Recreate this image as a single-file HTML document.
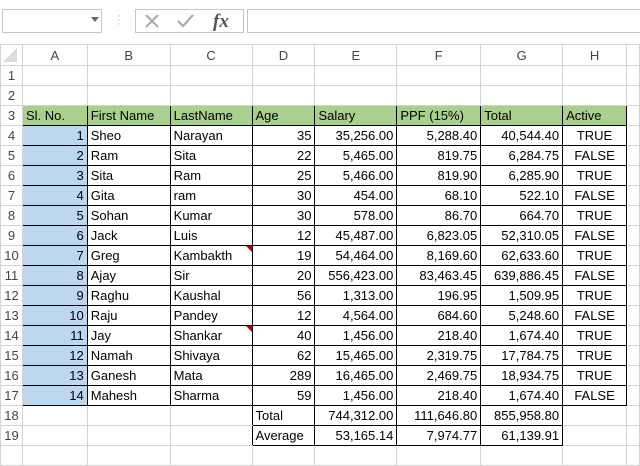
<!DOCTYPE html><html><head><style>
body{margin:0;width:640px;height:459px;overflow:hidden;background:#fff;font-family:"Liberation Sans",sans-serif;position:relative}
.nb{position:absolute;left:2px;top:9px;width:100px;height:24px;border:1px solid #c6c6c6;box-sizing:border-box}
.fx{position:absolute;left:135px;top:9px;width:109px;height:24px;border:1px solid #c6c6c6;box-sizing:border-box}
.fb{position:absolute;left:247px;top:9px;width:400px;height:24px;border:1px solid #c6c6c6;box-sizing:border-box}
table{position:absolute;left:0;top:44px;border-collapse:collapse;table-layout:fixed;font-size:13px}
td{border:1px solid #d4d4d4;height:19px;padding:0 3px;white-space:nowrap;overflow:hidden;color:#000;line-height:17px}
tr.h td{background:#fff;color:#444;text-align:center;height:20px}
td.rh{text-align:center;color:#444;padding:0}
.r{text-align:right}.c{text-align:center}
.g{background:#a9d08e}.bl{background:#bdd7ee}
.k{border:1px solid #000}
.kr{border-right:1px solid #000}
.tri{position:absolute;width:0;height:0;border-top:6px solid #c00000;border-left:6px solid transparent}
</style></head><body>
<div class="nb"><span style="position:absolute;left:88px;top:7px;border-top:5px solid #666;border-left:4px solid transparent;border-right:4px solid transparent"></span></div>
<div style="position:absolute;left:117px;top:14px;color:#aaa;font-size:11px;line-height:4px">·<br>·<br>·</div>
<div class="fx">
<svg width="107" height="22" style="position:absolute;left:0;top:0"><path d="M10 5L22 17M22 5L10 17" stroke="#aaa" stroke-width="2"/><path d="M42 11L47 16L57 5" stroke="#aaa" stroke-width="2.2" fill="none"/><text x="77" y="17" font-family="Liberation Serif" font-style="italic" font-weight="bold" font-size="19" fill="#555">fx</text></svg></div>
<div class="fb"></div>
<table>
<colgroup><col style="width:22px"><col style="width:65px"><col style="width:83px"><col style="width:82px"><col style="width:63px"><col style="width:82px"><col style="width:84px"><col style="width:82px"><col style="width:64px"><col style="width:13px"></colgroup>
<tr class="h"><td></td><td>A</td><td>B</td><td>C</td><td>D</td><td>E</td><td>F</td><td>G</td><td>H</td><td></td></tr>
<tr><td class="rh">1</td><td></td><td></td><td></td><td></td><td></td><td></td><td></td><td></td><td></td></tr>
<tr><td class="rh">2</td><td></td><td></td><td></td><td></td><td></td><td></td><td></td><td></td><td></td></tr>
<tr><td class="rh">3</td><td class="k g">Sl. No.</td><td class="k g">First Name</td><td class="k g">LastName</td><td class="k g">Age</td><td class="k g">Salary</td><td class="k g">PPF (15%)</td><td class="k g">Total</td><td class="k g">Active</td><td></td></tr>
<tr><td class="rh">4</td><td class="k bl r">1</td><td class="k">Sheo</td><td class="k">Narayan</td><td class="k r">35</td><td class="k r">35,256.00</td><td class="k r">5,288.40</td><td class="k r">40,544.40</td><td class="k c">TRUE</td><td></td></tr>
<tr><td class="rh">5</td><td class="k bl r">2</td><td class="k">Ram</td><td class="k">Sita</td><td class="k r">22</td><td class="k r">5,465.00</td><td class="k r">819.75</td><td class="k r">6,284.75</td><td class="k c">FALSE</td><td></td></tr>
<tr><td class="rh">6</td><td class="k bl r">3</td><td class="k">Sita</td><td class="k">Ram</td><td class="k r">25</td><td class="k r">5,466.00</td><td class="k r">819.90</td><td class="k r">6,285.90</td><td class="k c">TRUE</td><td></td></tr>
<tr><td class="rh">7</td><td class="k bl r">4</td><td class="k">Gita</td><td class="k">ram</td><td class="k r">30</td><td class="k r">454.00</td><td class="k r">68.10</td><td class="k r">522.10</td><td class="k c">FALSE</td><td></td></tr>
<tr><td class="rh">8</td><td class="k bl r">5</td><td class="k">Sohan</td><td class="k">Kumar</td><td class="k r">30</td><td class="k r">578.00</td><td class="k r">86.70</td><td class="k r">664.70</td><td class="k c">TRUE</td><td></td></tr>
<tr><td class="rh">9</td><td class="k bl r">6</td><td class="k">Jack</td><td class="k">Luis</td><td class="k r">12</td><td class="k r">45,487.00</td><td class="k r">6,823.05</td><td class="k r">52,310.05</td><td class="k c">FALSE</td><td></td></tr>
<tr><td class="rh">10</td><td class="k bl r">7</td><td class="k">Greg</td><td class="k">Kambakth</td><td class="k r">19</td><td class="k r">54,464.00</td><td class="k r">8,169.60</td><td class="k r">62,633.60</td><td class="k c">TRUE</td><td></td></tr>
<tr><td class="rh">11</td><td class="k bl r">8</td><td class="k">Ajay</td><td class="k">Sir</td><td class="k r">20</td><td class="k r">556,423.00</td><td class="k r">83,463.45</td><td class="k r">639,886.45</td><td class="k c">FALSE</td><td></td></tr>
<tr><td class="rh">12</td><td class="k bl r">9</td><td class="k">Raghu</td><td class="k">Kaushal</td><td class="k r">56</td><td class="k r">1,313.00</td><td class="k r">196.95</td><td class="k r">1,509.95</td><td class="k c">TRUE</td><td></td></tr>
<tr><td class="rh">13</td><td class="k bl r">10</td><td class="k">Raju</td><td class="k">Pandey</td><td class="k r">12</td><td class="k r">4,564.00</td><td class="k r">684.60</td><td class="k r">5,248.60</td><td class="k c">FALSE</td><td></td></tr>
<tr><td class="rh">14</td><td class="k bl r">11</td><td class="k">Jay</td><td class="k">Shankar</td><td class="k r">40</td><td class="k r">1,456.00</td><td class="k r">218.40</td><td class="k r">1,674.40</td><td class="k c">TRUE</td><td></td></tr>
<tr><td class="rh">15</td><td class="k bl r">12</td><td class="k">Namah</td><td class="k">Shivaya</td><td class="k r">62</td><td class="k r">15,465.00</td><td class="k r">2,319.75</td><td class="k r">17,784.75</td><td class="k c">TRUE</td><td></td></tr>
<tr><td class="rh">16</td><td class="k bl r">13</td><td class="k">Ganesh</td><td class="k">Mata</td><td class="k r">289</td><td class="k r">16,465.00</td><td class="k r">2,469.75</td><td class="k r">18,934.75</td><td class="k c">TRUE</td><td></td></tr>
<tr><td class="rh">17</td><td class="k bl r">14</td><td class="k">Mahesh</td><td class="k">Sharma</td><td class="k r">59</td><td class="k r">1,456.00</td><td class="k r">218.40</td><td class="k r">1,674.40</td><td class="k c">FALSE</td><td></td></tr>
<tr><td class="rh">18</td><td></td><td></td><td class="kr"></td><td class="k">Total</td><td class="k r">744,312.00</td><td class="k r">111,646.80</td><td class="k r">855,958.80</td><td></td><td></td></tr>
<tr><td class="rh">19</td><td></td><td></td><td class="kr"></td><td class="k">Average</td><td class="k r">53,165.14</td><td class="k r">7,974.77</td><td class="k r">61,139.91</td><td></td><td></td></tr>
<tr><td class="rh"></td><td></td><td></td><td></td><td></td><td></td><td></td><td></td><td></td><td></td></tr>
</table>
<div style="position:absolute;left:3px;top:48px;width:0;height:0;border-bottom:14px solid #dcdcdc;border-left:14px solid transparent"></div>
<div class="tri" style="left:246px;top:246px"></div>
<div class="tri" style="left:246px;top:326px"></div>
</body></html>
